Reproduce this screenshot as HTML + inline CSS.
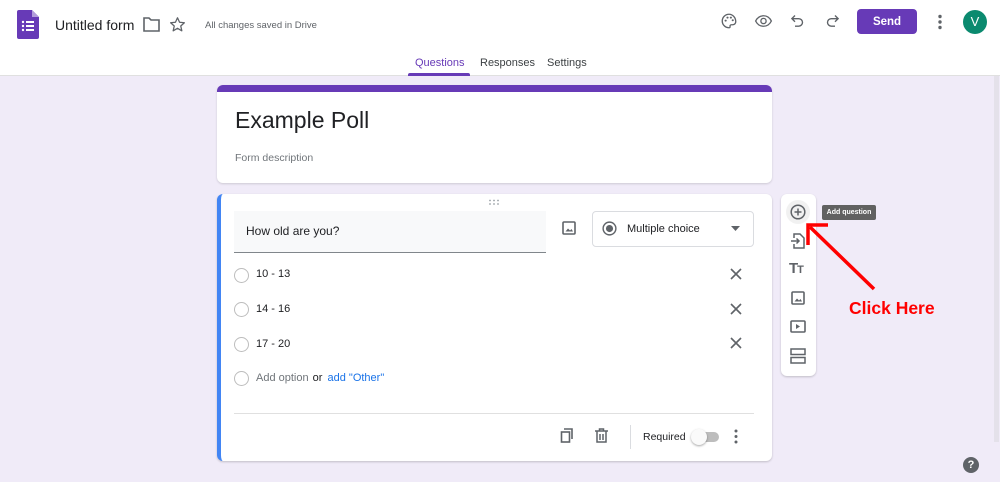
<!DOCTYPE html>
<html><head><style>
*{box-sizing:border-box;margin:0;padding:0}
body{width:1000px;height:482px;background:#f0ebf8;font-family:"Liberation Sans",sans-serif;position:relative;overflow:hidden;color:#202124}
.a{position:absolute}
svg{display:block}
</style></head><body>
<div class="a" style="left:0;top:0;width:1000px;height:76px;background:#fff;border-bottom:1px solid #e0e0e0"></div>
<svg class="a" style="left:17px;top:10px" width="22" height="29" viewBox="0 0 22 29"><path d="M2 0h13l7 7v20a2 2 0 0 1-2 2H2a2 2 0 0 1-2-2V2a2 2 0 0 1 2-2z" fill="#673ab7"/><path d="M15 0v7h7z" fill="#b39ddb"/><g fill="#fff"><circle cx="6" cy="12" r="1.2"/><circle cx="6" cy="16" r="1.2"/><circle cx="6" cy="20" r="1.2"/><rect x="9" y="11" width="8" height="2"/><rect x="9" y="15" width="8" height="2"/><rect x="9" y="19" width="8" height="2"/></g></svg>
<div class="a" style="left:55px;top:17px;font-size:14px;color:#202124">Untitled form</div>
<svg class="a" style="left:143px;top:17px" width="17" height="15" viewBox="0 0 17 15"><path d="M1 1h5l2 2h8v11H1z" fill="none" stroke="#5f6368" stroke-width="1.6"/></svg>
<svg class="a" style="left:169px;top:16px" width="17" height="17" viewBox="0 0 24 24"><path d="M12 2.5l2.9 6.3 6.8.7-5.1 4.6 1.5 6.8L12 17.4l-6.1 3.5 1.5-6.8-5.1-4.6 6.8-.7z" fill="none" stroke="#5f6368" stroke-width="1.8" stroke-linejoin="round"/></svg>
<div class="a" style="left:205px;top:20px;font-size:9.5px;color:#5f6368">All changes saved in Drive</div>
<svg class="a" style="left:720px;top:12px" width="18" height="18" viewBox="0 0 24 24"><path d="M12 3a9 9 0 0 0 0 18c1.2 0 1.6-.8 1.4-1.6-.3-1 .3-2.4 1.8-2.4H17a4 4 0 0 0 4-4c0-5.5-4-10-9-10z" fill="none" stroke="#5f6368" stroke-width="1.8"/><g fill="#5f6368"><circle cx="7.5" cy="11.5" r="1.4"/><circle cx="10" cy="7.5" r="1.4"/><circle cx="14.5" cy="7.5" r="1.4"/><circle cx="17" cy="11" r="1.4"/></g></svg>
<svg class="a" style="left:754px;top:12px" width="19" height="18" viewBox="0 0 24 24"><path d="M1.5 12C4 7 8 5 12 5s8 2 10.5 7c-2.5 5-6.5 7-10.5 7S4 17 1.5 12z" fill="none" stroke="#5f6368" stroke-width="1.8"/><circle cx="12" cy="12" r="3.5" fill="none" stroke="#5f6368" stroke-width="1.8"/></svg>
<svg class="a" style="left:790px;top:13px" width="15" height="15" viewBox="0 0 24 24"><path d="M8 4L3 9l5 5M3 9h11a6 6 0 0 1 0 12H8" fill="none" stroke="#5f6368" stroke-width="2.2"/></svg>
<svg class="a" style="left:825px;top:13px" width="15" height="15" viewBox="0 0 24 24"><path d="M16 4l5 5-5 5M21 9H10a6 6 0 0 0 0 12h6" fill="none" stroke="#5f6368" stroke-width="2.2"/></svg>
<div class="a" style="left:857px;top:9px;width:60px;height:25px;background:#673ab7;border-radius:4px;color:#fff;font-size:11.5px;font-weight:bold;text-align:center;line-height:25px;padding-top:1px">Send</div>
<svg class="a" style="left:937px;top:14px" width="6" height="16" viewBox="0 0 6 16"><g fill="#5f6368"><circle cx="3" cy="2.5" r="1.7"/><circle cx="3" cy="8" r="1.7"/><circle cx="3" cy="13.5" r="1.7"/></g></svg>
<div class="a" style="left:963px;top:10px;width:24px;height:24px;border-radius:50%;background:#0b8a6f;color:#fff;font-size:13px;text-align:center;line-height:24px">V</div>
<div class="a" style="left:415px;top:57px;font-size:11px;color:#673ab7">Questions</div>
<div class="a" style="left:408px;top:73px;width:62px;height:3px;background:#673ab7;border-radius:2px 2px 0 0"></div>
<div class="a" style="left:480px;top:57px;font-size:11px;color:#3c4043">Responses</div>
<div class="a" style="left:547px;top:57px;font-size:11px;color:#3c4043">Settings</div>
<div class="a" style="left:217px;top:85px;width:555px;height:98px;background:#fff;border-radius:6px;overflow:hidden;box-shadow:0 1px 2px rgba(0,0,0,.15)"><div style="height:7px;background:#673ab7"></div></div>
<div class="a" style="left:235px;top:107px;font-size:23px;color:#202124">Example Poll</div>
<div class="a" style="left:235px;top:152px;font-size:10.5px;color:#70757a">Form description</div>
<div class="a" style="left:217px;top:194px;width:555px;height:267px;background:#fff;border-radius:6px;box-shadow:0 1px 2px rgba(0,0,0,.2);border-left:4px solid #4285f4"></div>
<svg class="a" style="left:488px;top:199px" width="12" height="7" viewBox="0 0 12 7"><g fill="#9aa0a6"><circle cx="2" cy="1.5" r=".9"/><circle cx="6" cy="1.5" r=".9"/><circle cx="10" cy="1.5" r=".9"/><circle cx="2" cy="5" r=".9"/><circle cx="6" cy="5" r=".9"/><circle cx="10" cy="5" r=".9"/></g></svg>
<div class="a" style="left:234px;top:211px;width:312px;height:42px;background:#f8f9fa;border-bottom:1px solid #80868b"></div>
<div class="a" style="left:246px;top:224px;font-size:12px">How old are you?</div>
<svg class="a" style="left:562px;top:221px" width="14" height="14" viewBox="0 0 14 14"><rect x="1" y="1" width="12" height="12" rx="1" fill="none" stroke="#5f6368" stroke-width="1.6"/><path d="M3.5 10.5l2.5-3 2 2 1.5-1.5 1.5 2.5z" fill="#5f6368"/></svg>
<div class="a" style="left:592px;top:211px;width:162px;height:36px;border:1px solid #dadce0;border-radius:4px"></div>
<svg class="a" style="left:602px;top:221px" width="15" height="15" viewBox="0 0 16 16"><circle cx="8" cy="8" r="6.8" fill="none" stroke="#5f6368" stroke-width="1.5"/><circle cx="8" cy="8" r="3.8" fill="#5f6368"/></svg>
<div class="a" style="left:627px;top:223px;font-size:11px;color:#202124">Multiple choice</div>
<svg class="a" style="left:731px;top:226px" width="9" height="5" viewBox="0 0 9 5"><path d="M0 0h9L4.5 5z" fill="#5f6368"/></svg>
<div class="a" style="left:234px;top:268px;width:15px;height:15px;border:1.5px solid #bdbdbd;border-radius:50%"></div>
<div class="a" style="left:256px;top:268px;font-size:11px">10 - 13</div>
<div class="a" style="left:234px;top:302px;width:15px;height:15px;border:1.5px solid #bdbdbd;border-radius:50%"></div>
<div class="a" style="left:256px;top:303px;font-size:11px">14 - 16</div>
<div class="a" style="left:234px;top:337px;width:15px;height:15px;border:1.5px solid #bdbdbd;border-radius:50%"></div>
<div class="a" style="left:256px;top:338px;font-size:11px">17 - 20</div>
<div class="a" style="left:234px;top:371px;width:15px;height:15px;border:1.5px solid #bdbdbd;border-radius:50%"></div>
<div class="a" style="left:256px;top:372px;font-size:11px;color:#70757a">Add option <span style="color:#202124;margin-left:1px">or</span> <span style="color:#1a73e8;margin-left:2px">add "Other"</span></div>
<svg class="a" style="left:730px;top:268px" width="12" height="12" viewBox="0 0 12 12"><path d="M1 1l10 10M11 1L1 11" stroke="#5f6368" stroke-width="1.6"/></svg>
<svg class="a" style="left:730px;top:303px" width="12" height="12" viewBox="0 0 12 12"><path d="M1 1l10 10M11 1L1 11" stroke="#5f6368" stroke-width="1.6"/></svg>
<svg class="a" style="left:730px;top:337px" width="12" height="12" viewBox="0 0 12 12"><path d="M1 1l10 10M11 1L1 11" stroke="#5f6368" stroke-width="1.6"/></svg>
<div class="a" style="left:234px;top:413px;width:520px;height:1px;background:#e0e0e0"></div>
<svg class="a" style="left:560px;top:428px" width="14" height="15" viewBox="0 0 14 15"><path d="M4 1h8v10" fill="none" stroke="#5f6368" stroke-width="1.6"/><rect x="1.5" y="4" width="8" height="10" fill="none" stroke="#5f6368" stroke-width="1.6"/></svg>
<svg class="a" style="left:595px;top:428px" width="13" height="15" viewBox="0 0 13 15"><path d="M0 3h13M4.5 3V1h4v2M2 3v11h9V3M5 6v6M8 6v6" fill="none" stroke="#5f6368" stroke-width="1.5"/></svg>
<div class="a" style="left:630px;top:425px;width:1px;height:24px;background:#dadce0"></div>
<div class="a" style="left:643px;top:431px;font-size:10.5px">Required</div>
<div class="a" style="left:694px;top:432px;width:25px;height:10px;border-radius:5px;background:#bdbdbd"></div>
<div class="a" style="left:691px;top:429px;width:16px;height:16px;border-radius:50%;background:#fafafa;box-shadow:0 1px 2px rgba(0,0,0,.35)"></div>
<svg class="a" style="left:733px;top:429px" width="6" height="15" viewBox="0 0 6 15"><g fill="#5f6368"><circle cx="3" cy="2" r="1.5"/><circle cx="3" cy="7.5" r="1.5"/><circle cx="3" cy="13" r="1.5"/></g></svg>
<div class="a" style="left:781px;top:194px;width:35px;height:182px;background:#fff;border-radius:6px;box-shadow:0 1px 2px rgba(0,0,0,.2)"></div>
<div class="a" style="left:786px;top:200px;width:24px;height:24px;border-radius:50%;background:#f1f1f1"></div>
<svg class="a" style="left:790px;top:204px" width="16" height="16" viewBox="0 0 16 16"><circle cx="8" cy="8" r="6.8" fill="none" stroke="#5f6368" stroke-width="1.5"/><path d="M8 4.5v7M4.5 8h7" stroke="#5f6368" stroke-width="1.5"/></svg>
<svg class="a" style="left:791px;top:233px" width="14" height="16" viewBox="0 0 14 16"><path d="M3 5V1h6l4 4v10H3v-4" fill="none" stroke="#5f6368" stroke-width="1.5"/><path d="M0 8h8M5.5 5.5L8 8l-2.5 2.5" fill="none" stroke="#5f6368" stroke-width="1.5"/></svg>
<div class="a" style="left:789px;top:260px;font-size:15px;font-weight:bold;color:#5f6368;letter-spacing:-1px">T<span style="font-size:11px">T</span></div>
<svg class="a" style="left:791px;top:291px" width="14" height="14" viewBox="0 0 14 14"><rect x="1" y="1" width="12" height="12" rx="1" fill="none" stroke="#5f6368" stroke-width="1.6"/><path d="M3.5 10.5l2.5-3 2 2 1.5-1.5 1.5 2.5z" fill="#5f6368"/></svg>
<svg class="a" style="left:790px;top:320px" width="16" height="13" viewBox="0 0 16 13"><rect x="1" y="1" width="14" height="11" rx="1" fill="none" stroke="#5f6368" stroke-width="1.6"/><path d="M6 4v5l4-2.5z" fill="#5f6368"/></svg>
<svg class="a" style="left:790px;top:348px" width="16" height="16" viewBox="0 0 16 16"><rect x="1" y="1" width="14" height="5.5" fill="none" stroke="#5f6368" stroke-width="1.5"/><rect x="1" y="9.5" width="14" height="5.5" fill="none" stroke="#5f6368" stroke-width="1.5"/></svg>
<div class="a" style="left:822px;top:205px;width:54px;height:15px;background:#616161;border-radius:2px;color:#fff;font-size:7px;font-weight:bold;text-align:center;line-height:15px">Add question</div>
<svg class="a" style="left:800px;top:215px" width="80" height="80" viewBox="0 0 80 80"><path d="M74 74L10 12" stroke="#f00" stroke-width="3.5"/><path d="M28 10H8v20" fill="none" stroke="#f00" stroke-width="3.5"/></svg>
<div class="a" style="left:849px;top:298px;font-size:17.5px;font-weight:bold;color:#f00">Click Here</div>
<div class="a" style="left:963px;top:457px;width:16px;height:16px;border-radius:50%;background:#5f6368;color:#fff;font-size:11px;font-weight:bold;text-align:center;line-height:16px">?</div>
<div class="a" style="left:994px;top:76px;width:5px;height:366px;background:#e4e1ea"></div>
</body></html>
